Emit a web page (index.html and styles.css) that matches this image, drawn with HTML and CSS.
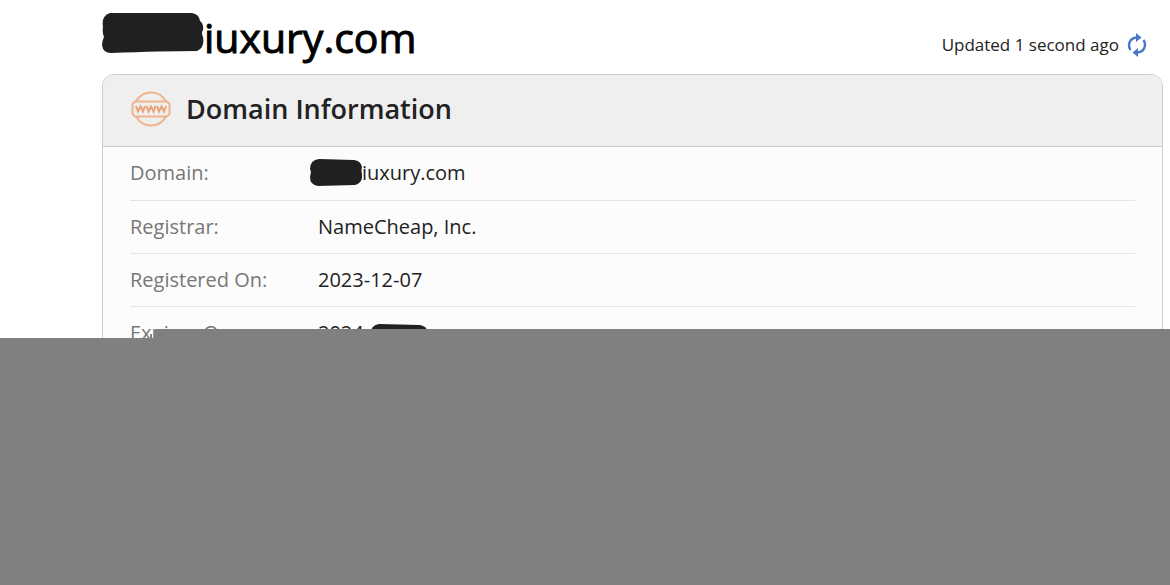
FILE: index.html
```html
<!DOCTYPE html>
<html lang="en">
<head>
    <meta charset="UTF-8">
    <meta name="viewport" content="width=device-width, initial-scale=1.0">
    <title>Domain Information</title>
    <link rel="stylesheet" href="styles.css">
</head>
<body>
    <main class="page">
        <header class="top">
            <h1 class="title">
                <svg class="mark mark-title" viewBox="0 0 102 40" aria-hidden="true">
                    <path d="M8 0H90Q97 1 98 8Q102 11 101 17Q99 20 101 24Q103 35 95 38Q60 38 9 40Q1 40 0 32Q0 28 2 24Q0 19 1 14Q-1 3 8 0Z" />
                </svg>iuxury.com
            </h1>
            <div class="updated">
                <span>Updated 1 second ago</span>
                <button class="refresh" type="button" aria-label="Refresh">
                    <svg viewBox="0 0 20 24" aria-hidden="true">
                        <path class="arc" d="M3.500 17C.500 12.500 2 5 10 4.500M16.500 7C19.500 11.500 18 19 10 19.500" />
                        <path class="tip" d="M9 0L14.500 4.500L9 9ZM11 15L5.500 19.500L11 24Z" />
                    </svg>
                </button>
            </div>
        </header>

        <section class="card">
            <div class="card-head">
                <svg class="www" viewBox="0 0 40 36" aria-hidden="true">
                    <path d="M5 10.500C8 5 13.500 1.500 20 1.500S32 5 35 10.500M5 25.500C8 31 13.500 34.500 20 34.500S32 31 35 25.500" />
                    <path d="M4 10.500H36L38.500 13V23L36 25.500H4L1.500 23V13Z" />
                    <path class="www-letters" d="M5 15L7 20.500L9.500 15.500L12 20.500L14 15M15.500 15L17.500 20.500L20 15.500L22.500 20.500L24.500 15M26 15L28 20.500L30.500 15.500L33 20.500L35 15" />
                </svg>
                <h2>Domain Information</h2>
            </div>
            <table class="info">
                <tbody>
                    <tr>
                        <th scope="row">Domain:</th>
                        <td>
                            <svg class="mark mark-domain" viewBox="0 0 52 27" aria-hidden="true">
                                <path d="M9 0L44 1Q51 2 52 8Q51 12 52 15Q53 24 45 26L8 27Q0 26 0 18L1 13L0 10Q0 1 9 0Z" />
                            </svg>iuxury.com
                        </td>
                    </tr>
                    <tr>
                        <th scope="row">Registrar:</th>
                        <td>NameCheap, Inc.</td>
                    </tr>
                    <tr>
                        <th scope="row">Registered On:</th>
                        <td>2023-12-07</td>
                    </tr>
                    <tr>
                        <th scope="row">Expires On:</th>
                        <td>
                            2024-<svg class="mark mark-date" viewBox="0 0 58 20" aria-hidden="true">
                                <path d="M9 0L50 1Q57 2 58 9Q58 18 50 20H8Q0 19 0 10Q1 1 9 0Z" />
                            </svg>
                        </td>
                    </tr>
                </tbody>
            </table>
        </section>
    </main>
    <div class="cover"></div>
</body>
</html>
```

FILE: styles.css
```css
* {
    margin: 0;
    padding: 0;
    box-sizing: border-box;
}

body {
    position: relative;
    min-height: 100vh;
    background-color: #fff;
    font-family: "Open Sans", sans-serif;
    color: #222;
}

.page {
    padding: 0 7px 0 102px;
}

.top {
    display: flex;
    justify-content: space-between;
    align-items: center;
    height: 74px;
}

.title {
    display: flex;
    align-items: center;
    font-size: 41px;
    font-weight: 400;
    line-height: 74px;
    color: #000;
    -webkit-text-stroke: 1px #000;
}

.mark {
    flex-shrink: 0;
    fill: #202020;
}

.mark-title {
    width: 102px;
    height: 40px;
    margin-bottom: 8px;
}

.updated {
    display: flex;
    align-items: center;
    gap: 8px;
    padding: 16px 16px 0 0;
    font-size: 17px;
    line-height: 24px;
}

.refresh {
    width: 20px;
    height: 24px;
    border: none;
    background: none;
    cursor: pointer;
}

.refresh svg {
    display: block;
    width: 20px;
    height: 24px;
}

.arc {
    fill: none;
    stroke: #4a78c8;
    stroke-width: 2.4;
}

.tip {
    fill: #4a78c8;
}

.card {
    border: 1px solid #ccc;
    border-radius: 12px;
    background-color: #fcfcfc;
    overflow: hidden;
}

.card-head {
    display: flex;
    align-items: center;
    gap: 15px;
    height: 72px;
    padding: 0 28px 4px;
    border-bottom: 1px solid #ccc;
    background-color: #efefef;
}

.card-head h2 {
    font-size: 27px;
    font-weight: 600;
    line-height: 36px;
}

.www {
    width: 40px;
    height: 36px;
    fill: none;
    stroke: #efb48c;
    stroke-width: 2;
}

.www-letters {
    stroke: #eba477;
}

/* Rows */
.info {
    width: calc(100% - 54px);
    margin: 0 27px;
    border-collapse: collapse;
    font-size: 20px;
    line-height: 28px;
    text-align: left;
}

.info th {
    width: 188px;
    font-weight: 400;
    color: #777;
}

.info th,
.info td {
    height: 53px;
    border-bottom: 1px solid #e4e4e4;
    white-space: nowrap;
}

.mark-domain {
    width: 52px;
    height: 27px;
    margin-left: -8px;
    vertical-align: -6px;
}

.mark-date {
    width: 58px;
    height: 20px;
    vertical-align: middle;
}

/* Grey panel over the lower part of the page */
.cover {
    position: absolute;
    top: 329px;
    right: 0;
    bottom: 0;
    left: 0;
    background-color: #808080;
    clip-path: polygon(155px 0, 100% 0, 100% 100%, 0 100%, 0 9px, 150px 9px, 150px 5px, 152px 5px, 152px 9px, 154px 9px, 154px 5px, 155px 5px);
}
```
